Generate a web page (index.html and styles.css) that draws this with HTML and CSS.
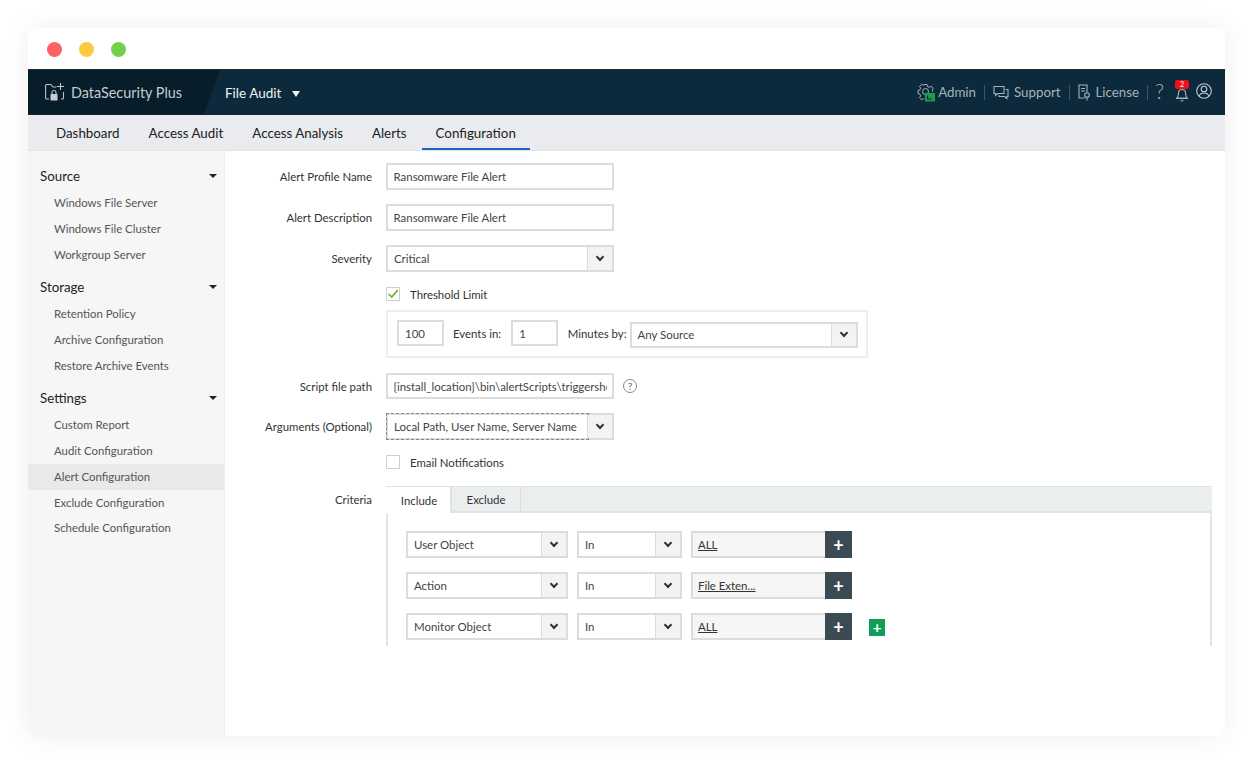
FILE: index.html
```html
<!DOCTYPE html>
<html lang="en">
<head>
<meta charset="utf-8">
<title>DataSecurity Plus</title>
<link rel="stylesheet" href="styles.css">
</head>
<body>
<div class="window">
  <div class="titlebar">
    <span class="dot red"></span><span class="dot yellow"></span><span class="dot green"></span>
  </div>
  <header class="header">
    <div class="brand">
      <svg class="logo" width="20" height="20" viewBox="0 0 20 20" fill="none" stroke="#b9c3ca" stroke-width="1.1">
        <path d="M4 17H1.500a1 1 0 0 1-.9-1V3.500a1 1 0 0 1 .9-1h4.500l2 2.500H11.500"/>
        <path d="M18.500 10v6a1 1 0 0 1-1 1H16"/>
        <path d="M15.500 1v7M12 4.500h7"/>
        <rect x="5.500" y="12" width="7" height="6.500" rx=".5" fill="#c6ced3" stroke="none"/>
        <path d="M7 12v-1.500a2 2 0 0 1 4 0V12"/>
      </svg>
      <span>DataSecurity Plus</span>
    </div>
    <div class="product"><span>File Audit</span><i class="product-caret"></i></div>
    <div class="tools">
      <svg class="tool-icon" width="18" height="19" viewBox="0 0 18 19" fill="none" stroke="#a7b3bb" stroke-width="1">
        <path d="M7 1.500h3l.5 2 1.800.8 1.900-1 2 2-1 1.900.6 1.500M1 7.500l1.800-.5.8-1.800-1-1.900 2-2 1.900 1L7 1.500M1 7.500v3l1.800.5.8 1.800-1 1.900 2 2 1.900-1 .8.300"/>
        <circle cx="8.500" cy="8.500" r="3"/>
        <rect x="8" y="10" width="10" height="8.500" fill="#1f9a4a" stroke="none"/>
        <path d="M10.500 12.500v3.500h4" stroke="#0c2a3a" stroke-width="1.200"/>
      </svg>
      <span class="tool">Admin</span><i class="sep"></i>
      <svg class="tool-icon support" width="16" height="15" viewBox="0 0 16 15" fill="none" stroke="#a7b3bb" stroke-width="1.100">
        <path d="M1 1.500h10v7H4.500L2.500 10.500V8.500H1z"/>
        <path d="M12.500 4.500H15v7h-1.200v2L11.500 11.500H6V10"/>
      </svg>
      <span class="tool">Support</span><i class="sep"></i>
      <svg class="tool-icon license" width="13" height="17" viewBox="0 0 13 17" fill="none" stroke="#a7b3bb" stroke-width="1.100">
        <path d="M7 14H1V1h8v7"/>
        <path d="M3 4.500h4M3 7h4"/>
        <circle cx="9" cy="11" r="2.300"/>
        <path d="M9 13.300V16.500"/>
      </svg>
      <span class="tool">License</span><i class="sep last"></i>
      <span class="help">?</span>
      <span class="bell">
        <svg width="14" height="16" viewBox="0 0 14 16" fill="none" stroke="#a7b3bb" stroke-width="1.100">
          <path d="M2 12c1-1 1.500-2 1.500-5a3.500 3.500 0 0 1 7 0c0 3 .5 4 1.500 5zM1 12.500h12M5.500 14.800h3"/>
        </svg>
        <b class="badge">2</b>
      </span>
      <svg class="user" width="16" height="16" viewBox="0 0 16 16" fill="none" stroke="#c3ccd2" stroke-width="1.100">
        <circle cx="8" cy="8" r="7.300"/>
        <circle cx="8" cy="6" r="2.800"/>
        <path d="M3 13c.8-2 2.500-3 5-3s4.200 1 5 3"/>
      </svg>
    </div>
  </header>
  <nav class="nav">
    <a class="nav-item">Dashboard</a>
    <a class="nav-item">Access Audit</a>
    <a class="nav-item">Access Analysis</a>
    <a class="nav-item">Alerts</a>
    <a class="nav-item active">Configuration</a>
  </nav>
  <div class="body">
    <aside class="sidebar">
      <h3 class="side-head">Source<i class="side-caret"></i></h3>
      <a class="side-link">Windows File Server</a>
      <a class="side-link">Windows File Cluster</a>
      <a class="side-link">Workgroup Server</a>
      <h3 class="side-head">Storage<i class="side-caret"></i></h3>
      <a class="side-link">Retention Policy</a>
      <a class="side-link">Archive Configuration</a>
      <a class="side-link">Restore Archive Events</a>
      <h3 class="side-head">Settings<i class="side-caret"></i></h3>
      <a class="side-link">Custom Report</a>
      <a class="side-link">Audit Configuration</a>
      <a class="side-link current">Alert Configuration</a>
      <a class="side-link">Exclude Configuration</a>
      <a class="side-link">Schedule Configuration</a>
    </aside>
    <main class="main">
      <div class="row r-name"><label class="label">Alert Profile Name</label><div class="field wide">Ransomware File Alert</div></div>
      <div class="row r-desc"><label class="label">Alert Description</label><div class="field wide">Ransomware File Alert</div></div>
      <div class="row r-sev"><label class="label">Severity</label>
        <div class="select wide"><span class="select-text">Critical</span><span class="select-btn"><i class="chev"></i></span></div></div>
      <div class="row r-thr"><label class="label"></label><span class="check checked"><svg width="14" height="12" viewBox="0 0 14 12" fill="none" stroke="#6db33f" stroke-width="2"><path d="M2 6l3.500 3.500L12.500 1.500"/></svg></span><span class="check-label">Threshold Limit</span></div>
      <div class="row r-box"><label class="label"></label>
        <div class="threshold">
          <div class="field small">100</div><span class="t1">Events in:</span>
          <div class="field small">1</div><span class="t2">Minutes by:</span>
          <div class="select source"><span class="select-text">Any Source</span><span class="select-btn"><i class="chev"></i></span></div>
        </div></div>
      <div class="row r-script"><label class="label">Script file path</label><div class="field wide script"><span class="clip">{install_location}\bin\alertScripts\triggershe</span></div><span class="qmark">?</span></div>
      <div class="row r-args"><label class="label">Arguments (Optional)</label>
        <div class="select wide focus"><span class="select-text">Local Path, User Name, Server Name</span><span class="select-btn"><i class="chev"></i></span></div></div>
      <div class="row r-mail"><label class="label"></label><span class="check"></span><span class="check-label">Email Notifications</span></div>
      <div class="row r-crit"><label class="label crit-label">Criteria</label>
        <div class="tabs">
          <div class="tabbar"><span class="tab on">Include</span><span class="tab">Exclude</span></div>
          <div class="crit-row">
            <div class="select c1"><span class="select-text">User Object</span><span class="select-btn"><i class="chev"></i></span></div>
            <div class="select c2"><span class="select-text">In</span><span class="select-btn"><i class="chev"></i></span></div>
            <div class="picker"><a class="pick-text">ALL</a><span class="pick-btn">+</span></div>
          </div>
          <div class="crit-row">
            <div class="select c1"><span class="select-text">Action</span><span class="select-btn"><i class="chev"></i></span></div>
            <div class="select c2"><span class="select-text">In</span><span class="select-btn"><i class="chev"></i></span></div>
            <div class="picker"><a class="pick-text">File Exten...</a><span class="pick-btn">+</span></div>
          </div>
          <div class="crit-row">
            <div class="select c1"><span class="select-text">Monitor Object</span><span class="select-btn"><i class="chev"></i></span></div>
            <div class="select c2"><span class="select-text">In</span><span class="select-btn"><i class="chev"></i></span></div>
            <div class="picker"><a class="pick-text">ALL</a><span class="pick-btn">+</span></div>
            <span class="add">+</span>
          </div>
        </div></div>
    </main>
  </div>
</div>
</body>
</html>
```

FILE: styles.css
```css
* { box-sizing: border-box; }
html, body { margin: 0; height: 100%; }
body {
  background: #fff;
  padding: 28px 29px 30px 28px;
  font-family: Lato, "Open Sans", sans-serif;
  color: #333;
  overflow: hidden;
}
.window {
  height: 708px;
  display: flex;
  flex-direction: column;
  background: #fff;
  border-radius: 8px;
  box-shadow: 0 0 28px rgba(0, 0, 0, .07);
  overflow: hidden;
}
.titlebar {
  height: 41px;
  flex: none;
  display: flex;
  align-items: center;
  gap: 17px;
  padding: 2px 0 0 19px;
  background: #fff;
}
.dot { width: 15px; height: 15px; border-radius: 50%; }
.red { background: #fc6264; }
.yellow { background: #fdc943; }
.green { background: #73cf4c; }
.header {
  height: 46px;
  flex: none;
  display: flex;
  align-items: center;
  background: linear-gradient(110deg, #071d29 0, #071d29 180px, #0c2a3b 181px, #0c2a3b 100%);
  border-top: 1px solid #222b30;
  border-bottom: 1px solid #16232b;
  color: #fff;
}
.brand {
  width: 197px;
  display: flex;
  align-items: center;
  gap: 6px;
  padding-left: 17px;
  font-size: 14.4px;
  color: #c3ccd2;
}
.logo { flex: none; }
.product {
  display: flex;
  align-items: center;
  padding-top: 1px;
  font-size: 13.5px;
  color: #f0f3f5;
}
.product-caret {
  margin-left: 11px;
  margin-top: 3px;
  border-left: 4.5px solid transparent;
  border-right: 4.5px solid transparent;
  border-top: 6px solid #f0f3f5;
}
.tools {
  margin-left: auto;
  display: flex;
  align-items: center;
  padding-right: 13px;
  font-size: 13.3px;
  color: #a7b3bb;
}
.tool-icon { margin-right: 3px; flex: none; }
.tool-icon.support, .tool-icon.license { margin-right: 5px; }
.tool { line-height: 20px; }
.sep { width: 1px; height: 15px; background: #2f5a72; margin: 0 8px; }
.sep.last { margin-right: 7px; }
.help { width: 9px; font-size: 21px; line-height: 20px; font-weight: 300; text-align: center; margin-top: -3px; }
.bell { position: relative; width: 14px; height: 16px; margin-left: 11px; margin-top: 3px; }
.bell svg { display: block; }
.badge {
  position: absolute;
  left: 0;
  top: -6px;
  width: 14px;
  height: 9px;
  border-radius: 2px;
  background: #e8121b;
  color: #fff;
  font-size: 7px;
  font-weight: 400;
  line-height: 9px;
  text-align: center;
}
.user { margin-left: 7px; margin-top: -2px; }
.nav {
  height: 36px;
  flex: none;
  display: flex;
  align-items: stretch;
  gap: 29px;
  padding-left: 28px;
  background: #e9ebef;
  border-bottom: 1px solid #e2e4e8;
}
.nav-item {
  display: flex;
  align-items: center;
  font-size: 13.35px;
  color: #222;
}
.nav-item.active {
  padding: 2px 14px 0;
  margin-left: -14px;
  margin-right: -14px;
  border-bottom: 2px solid #1f66c4;
}
.body { flex: 1; display: flex; min-height: 0; }
.sidebar {
  width: 197px;
  flex: none;
  padding-top: 12px;
  background: #f6f6f6;
  border-right: 1px solid #ececec;
}
.side-head {
  position: relative;
  height: 26px;
  margin: 0 0 1.2px;
  padding-left: 12px;
  font-size: 13.3px;
  font-weight: 400;
  line-height: 26px;
  color: #222;
}
.side-link + .side-head { margin-top: 6.9px; }
.side-caret {
  position: absolute;
  right: 7px;
  top: 11px;
  border-left: 4px solid transparent;
  border-right: 4px solid transparent;
  border-top: 4px solid #222;
}
.side-link {
  display: block;
  height: 25.7px;
  padding-left: 26px;
  font-size: 11.4px;
  line-height: 25.7px;
  color: #555;
}
.side-link.current { background: #e9e9e9; }
.main { flex: 1; padding-top: 12px; min-width: 0; }
.row { display: flex; align-items: center; }
.label {
  width: 147px;
  margin-right: 14px;
  flex: none;
  text-align: right;
  font-size: 11.4px;
  color: #333;
}
.field, .select {
  height: 27px;
  border: 2px solid #dcdcdc;
  background: #fff;
  font-size: 11.45px;
  color: #444;
}
.field { display: flex; align-items: center; padding-left: 5.5px; }
.wide { width: 228px; }
.select { display: flex; }
.select-text {
  flex: 1;
  min-width: 0;
  display: flex;
  align-items: center;
  padding-left: 6px;
  white-space: nowrap;
}
.select-btn {
  width: 25px;
  flex: none;
  display: flex;
  align-items: center;
  justify-content: center;
  background: #f3f3f3;
  border-left: 1px solid #dcdcdc;
}
.chev {
  width: 6px;
  height: 6px;
  margin-top: -3px;
  border-right: 2px solid #333;
  border-bottom: 2px solid #333;
  transform: rotate(45deg);
}
.r-desc, .r-sev { margin-top: 14px; }
.r-thr { margin-top: 15px; height: 14px; }
.check {
  width: 14px;
  height: 14px;
  flex: none;
  border: 1px solid #cfcfcf;
  background: #fff;
  display: flex;
  align-items: center;
  justify-content: center;
}
.check-label { margin-left: 10px; font-size: 11.4px; color: #333; }
.r-box { margin-top: 9px; }
.threshold {
  width: 482px;
  height: 48px;
  display: flex;
  align-items: center;
  padding-left: 9px;
  border: 2px solid #eeeeee;
  font-size: 11.4px;
  color: #333;
}
.small { width: 47px; height: 26px; margin-top: -2px; padding-left: 6px; }
.t1 { margin: -2px 10px 0 9px; }
.t2 { margin: -2px 3px 0 9.5px; }
.source { width: 228px; height: 26px; margin-top: 1px; }
.r-script { margin-top: 15px; }
.script { height: 26px; padding-right: 5px; }
.clip { flex: 1; min-width: 0; white-space: nowrap; overflow: hidden; }
.qmark {
  width: 14px;
  height: 14px;
  margin-left: 9px;
  border: 1px solid #888;
  border-radius: 50%;
  font-size: 10px;
  line-height: 12px;
  text-align: center;
  color: #666;
}
.r-args { margin-top: 14px; }
.focus .select-text { outline: 1px dashed #888; outline-offset: 1px; }
.r-mail { margin-top: 15px; height: 14px; }
.r-crit { margin-top: 17px; align-items: flex-start; }
.crit-label { margin-top: 7px; }
.tabs {
  width: 826px;
  height: 160px;
  border-left: 2px solid #e4e4e4;
  border-right: 2px solid #e4e4e4;
}
.tabbar {
  height: 27px;
  margin: 0 -2px 18px;
  display: flex;
  background: #ebeeef;
  border-top: 1px solid #e2e2e2;
  border-bottom: 2px solid #e2e2e2;
  font-size: 11.4px;
  color: #333;
}
.tab {
  width: 69px;
  display: flex;
  align-items: center;
  justify-content: center;
  border-right: 1px solid #dcdcdc;
}
.tab.on {
  width: 66px;
  height: 26px;
  background: #fff;
  border-right: 2px solid #e2e2e2;
  padding-left: 2px;
}
.crit-row { display: flex; align-items: center; padding-left: 18px; height: 27px; margin-bottom: 14px; }
.c1 { width: 162px; }
.c2 { width: 105px; margin-left: 9px; }
.picker {
  width: 161px;
  height: 27px;
  margin-left: 9px;
  display: flex;
  background: #f6f6f6;
  border: 2px solid #dcdcdc;
  border-right: 0;
  font-size: 11.4px;
  color: #333;
}
.pick-text { flex: 1; padding-left: 5px; line-height: 23px; text-decoration: underline; }
.pick-btn {
  width: 27px;
  margin: -2px 0;
  background: #3c4a54;
  color: #fff;
  font-size: 18px;
  font-weight: 700;
  line-height: 28px;
  text-align: center;
}
.add {
  width: 16px;
  height: 17px;
  margin-left: 17px;
  margin-top: 2px;
  background: #0f9d58;
  color: #fff;
  font-size: 15px;
  font-weight: 700;
  line-height: 16px;
  text-align: center;
}
```
